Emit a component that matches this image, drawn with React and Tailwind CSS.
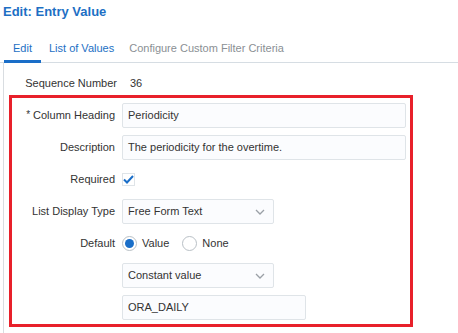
import React from 'react';

const font = { fontFamily: '"Liberation Sans", Arial, sans-serif' };

const Chevron = () => (
  <svg width="10" height="6" viewBox="0 0 10 6" className="text-[#9aa0a6]">
    <path d="M1 1l4 4 4-4" fill="none" stroke="currentColor" strokeWidth="1.3" />
  </svg>
);

const Row = ({ label, required, children }) => (
  <div className="flex items-center h-[25px]">
    <div className="w-[110px] text-right text-[11px] text-[#333] pr-[7px] shrink-0 whitespace-nowrap">
      {required && <span className="text-[10px] align-top mr-[3px]">*</span>}
      {label}
    </div>
    {children}
  </div>
);

const Input = ({ value, width }) => (
  <div className={`${width} h-[25px] border border-[#dfe4e8] rounded-[2px] bg-[#fbfcfe] px-[5px] flex items-center text-[11px] text-[#333] whitespace-nowrap`}>
    {value}
  </div>
);

const Select = ({ value }) => (
  <div className="w-[152px] h-[25px] border border-[#dfe4e8] rounded-[2px] bg-[#fbfcfe] pl-[5px] pr-[8px] flex items-center justify-between text-[11px] text-[#333]">
    <span>{value}</span>
    <Chevron />
  </div>
);

const App = () => {
  return (
    <div className="w-[458px] h-[333px] bg-white overflow-hidden" style={font}>
      <div className="pl-[3px] pt-[2px] h-[33px] text-[13px] font-bold text-[#1d6fc4]">Edit: Entry Value</div>
      <div className="flex border-b border-[#d6dde3] h-[30px] text-[11px] pl-[4px] whitespace-nowrap">
        <div className="px-[9px] pt-[7px] text-[#1d6fc4] border-b-[3px] border-[#1a6ec8] -mb-px">Edit</div>
        <div className="pl-[8px] pr-[7px] pt-[7px] text-[#1d6fc4]">List of Values</div>
        <div className="pl-[8px] pt-[7px] text-[#8a8f94]">Configure Custom Filter Criteria</div>
      </div>
      <div className="ml-[3px] border-l border-[#d9dde1] h-full pl-[5px]">
        <div className="flex items-end h-[32px] pb-[4px]">
          <div className="w-[115px] text-right text-[11px] text-[#333] pr-[7px] shrink-0 whitespace-nowrap">Sequence Number</div>
          <div className="text-[11px] text-[#333] pl-[6px]">36</div>
        </div>
        <div className="w-[404px] border-[3px] border-[#e8202a] pt-[5px] pb-[4px] flex flex-col gap-[7px]">
          <Row label="Column Heading" required>
            <Input value="Periodicity" width="w-[284px]" />
          </Row>
          <Row label="Description">
            <Input value="The periodicity for the overtime." width="w-[284px]" />
          </Row>
          <Row label="Required">
            <div className="w-[13px] h-[13px] border border-[#dfe4e8] bg-white flex items-center justify-center">
              <svg width="11" height="9" viewBox="0 0 11 9">
                <path d="M1 4.5l3 3 6-6.5" fill="none" stroke="#1a6ec8" strokeWidth="2" />
              </svg>
            </div>
          </Row>
          <Row label="List Display Type">
            <Select value="Free Form Text" />
          </Row>
          <Row label="Default">
            <div className="flex items-center text-[11px] text-[#333]">
              <div className="w-[15px] h-[15px] rounded-full border border-[#b9c0c6] bg-white flex items-center justify-center">
                <div className="w-[9px] h-[9px] rounded-full bg-[#1a6ec8]" />
              </div>
              <span className="ml-[5px]">Value</span>
              <div className="ml-[13px] w-[15px] h-[15px] rounded-full border border-[#b9c0c6] bg-white" />
              <span className="ml-[5px]">None</span>
            </div>
          </Row>
          <Row label="">
            <Select value="Constant value" />
          </Row>
          <Row label="">
            <Input value="ORA_DAILY" width="w-[184px]" />
          </Row>
        </div>
      </div>
    </div>
  );
};

export default App;
